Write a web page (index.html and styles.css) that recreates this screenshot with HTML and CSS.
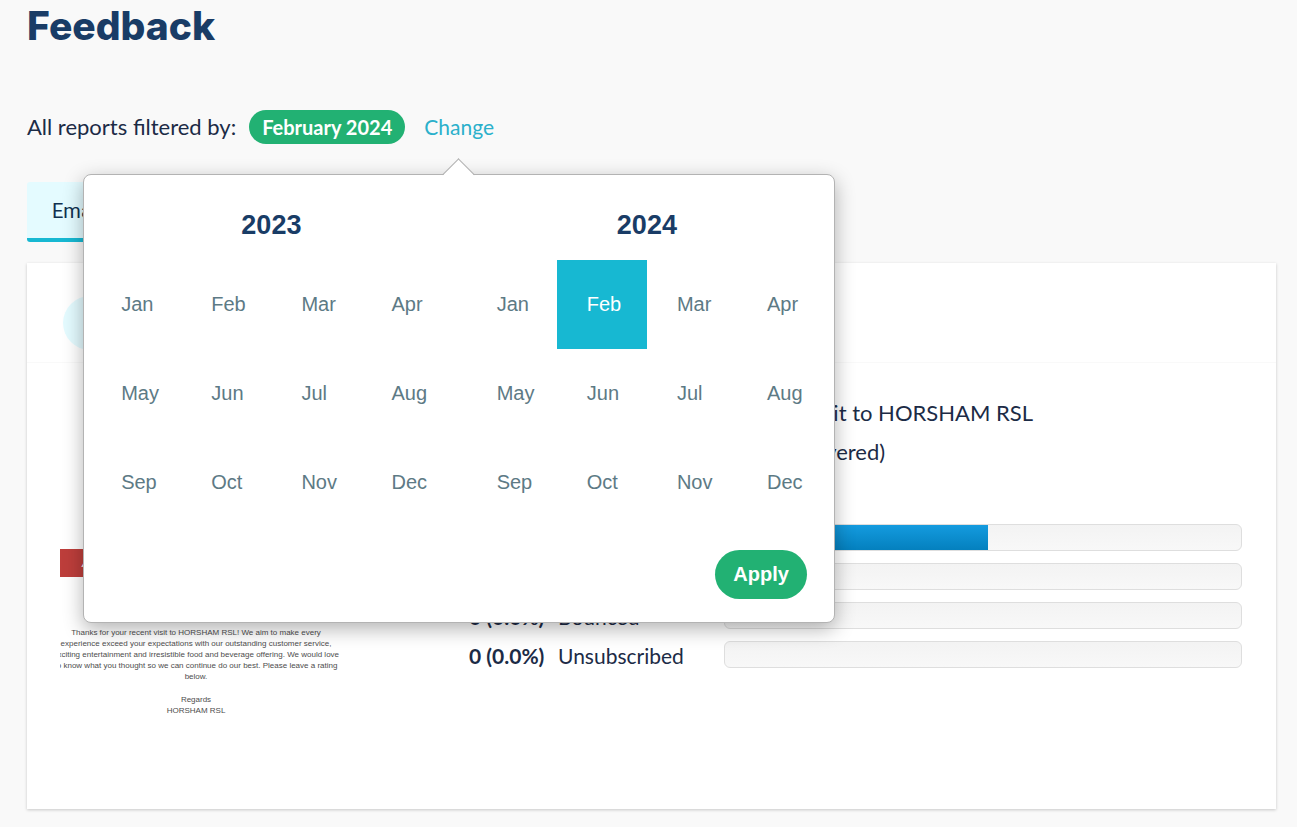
FILE: index.html
```html
<!DOCTYPE html>
<html lang="en">
<head>
    <meta charset="UTF-8">
    <title>Feedback</title>
    <link rel="stylesheet" href="styles.css">
</head>
<body>

    <h1>Feedback</h1>

    <div class="filter-bar">
        <span>All reports filtered by:</span>
        <span class="filter-pill">February 2024</span>
        <div class="filter-change">
            <a href="#">Change</a>

            <div class="popover">
                <span class="popover-arrow"></span>
                <div class="years">
                    <div class="year">
                        <h2>2023</h2>
                        <div class="months">
                            <button>Jan</button>
                            <button>Feb</button>
                            <button>Mar</button>
                            <button>Apr</button>
                            <button>May</button>
                            <button>Jun</button>
                            <button>Jul</button>
                            <button>Aug</button>
                            <button>Sep</button>
                            <button>Oct</button>
                            <button>Nov</button>
                            <button>Dec</button>
                        </div>
                    </div>
                    <div class="year">
                        <h2>2024</h2>
                        <div class="months">
                            <button>Jan</button>
                            <button class="selected">Feb</button>
                            <button>Mar</button>
                            <button>Apr</button>
                            <button>May</button>
                            <button>Jun</button>
                            <button>Jul</button>
                            <button>Aug</button>
                            <button>Sep</button>
                            <button>Oct</button>
                            <button>Nov</button>
                            <button>Dec</button>
                        </div>
                    </div>
                </div>
                <div class="popover-footer">
                    <button class="apply">Apply</button>
                </div>
            </div>
        </div>
    </div>

    <div class="tabs">
        <a href="#" class="tab">Email</a>
    </div>

    <div class="card">
        <div class="card-header">
            <span class="card-icon"></span>
        </div>
        <div class="card-body">
            <div class="preview">
                <div class="preview-banner">A big thanks</div>
                <div class="preview-text">
                    <p>Thanks for your recent visit to HORSHAM RSL! We aim to make every<br>
                    experience exceed your expectations with our outstanding customer service,<br>
                    exciting entertainment and irresistible food and beverage offering. We would love<br>
                    to know what you thought so we can continue do our best. Please leave a rating<br>
                    below.</p>
                    <p>Regards<br>
                    HORSHAM RSL</p>
                </div>
            </div>

            <div class="report">
                <p>Campaigns: Thanks for your recent visit to HORSHAM RSL</p>
                <p>Recipients: Members lists (emails delivered)</p>

                <div class="stats">
                    <div class="stat">
                        <strong>Opened</strong>
                        <span></span>
                        <div class="bar"><div class="bar-fill" style="width: 51%"></div></div>
                    </div>
                    <div class="stat">
                        <strong>Clicked</strong>
                        <span></span>
                        <div class="bar"></div>
                    </div>
                    <div class="stat">
                        <strong>0 (0.0%)</strong>
                        <span>Bounced</span>
                        <div class="bar"></div>
                    </div>
                    <div class="stat">
                        <strong>0 (0.0%)</strong>
                        <span>Unsubscribed</span>
                        <div class="bar"></div>
                    </div>
                </div>
            </div>
        </div>
    </div>

</body>
</html>
```

FILE: styles.css
```css
* {
    box-sizing: border-box;
}

body {
    margin: 0;
    padding: 6px 21px 17px 27px;
    background: #f9f9f9;
    color: #1c2b46;
    font-family: Lato, "Open Sans", sans-serif;
    font-size: 22px;
}

a {
    text-decoration: none;
}

button {
    border: none;
    cursor: pointer;
    font-family: "Liberation Sans", Arial, sans-serif;
    font-size: 20px;
}

h1 {
    margin: 0;
    color: #193c66;
    font-family: Inter, sans-serif;
    font-size: 39px;
    font-weight: 800;
    line-height: 40px;
}

.filter-bar {
    display: flex;
    align-items: center;
    margin-top: 64px;
    height: 34px;
    line-height: 32px;
}

.filter-pill {
    margin: 0 19px 0 13px;
    padding: 0 13px;
    border-radius: 17px;
    background: #22b173;
    color: #fff;
    font-size: 20px;
    font-weight: 700;
    line-height: 34px;
}

.filter-change {
    position: relative;
}

.filter-change a {
    display: block;
    color: #2bb0cb;
    font-size: 21px;
}

/* month picker */
.popover {
    position: absolute;
    top: 63px;
    left: 50%;
    z-index: 10;
    width: 752px;
    transform: translateX(-50%);
    padding: 30px 7px 23px;
    border: 1px solid #b3b3b3;
    border-radius: 8px;
    background: #fff;
    box-shadow: 0 6px 20px rgba(0, 0, 0, 0.3);
}

.popover-arrow {
    position: absolute;
    top: -12px;
    left: 50%;
    width: 23px;
    height: 23px;
    margin-left: -12px;
    border: 1px solid #b3b3b3;
    border-right: none;
    border-bottom: none;
    background: linear-gradient(135deg, #fff 50%, transparent 50%);
    transform: rotate(45deg);
}

.years {
    display: flex;
    gap: 15px;
}

.year {
    flex: 1;
}

.year h2 {
    margin: 0 0 15px;
    color: #193c66;
    font-family: "Liberation Sans", Arial, sans-serif;
    font-size: 27px;
    line-height: 40px;
    text-align: center;
}

.months {
    display: grid;
    grid-template-columns: repeat(4, 1fr);
}

.months button {
    height: 89px;
    padding: 0 0 0 30px;
    background: none;
    color: #5d7a85;
    text-align: left;
}

.months .selected {
    background: #17b8d2;
    color: #fff;
}

.popover-footer {
    display: flex;
    justify-content: flex-end;
    padding: 23px 20px 0;
}

.apply {
    width: 92px;
    height: 49px;
    padding: 0;
    border-radius: 25px;
    background: #22b173;
    color: #fff;
    font-weight: 700;
}

.tabs {
    display: flex;
    margin-top: 38px;
}

.tab {
    padding: 2px 25px 0;
    border-bottom: 4px solid #17b8d2;
    border-radius: 3px;
    background: #e4fbff;
    color: #10304f;
    font-family: Roboto, sans-serif;
    font-size: 20px;
    line-height: 54px;
}

.card {
    margin-top: 21px;
    background: #fff;
    box-shadow: 0 1px 3px rgba(0, 0, 0, 0.2);
}

.card-header {
    height: 100px;
    padding: 33px 36px;
    border-bottom: 1px solid #f9f9f9;
}

.card-icon {
    display: block;
    width: 54px;
    height: 54px;
    border-radius: 50%;
    background: #e4fbff;
}

.card-body {
    display: flex;
    gap: 119px;
    min-height: 446px;
    padding: 30px 34px 0 33px;
}

.preview {
    width: 290px;
    overflow: hidden;
    color: #4d4d4d;
    font-family: "Liberation Sans", Arial, sans-serif;
}

.preview-banner {
    margin-top: 156px;
    padding-left: 22px;
    background: #bd3e3b;
    color: #fff;
    font-size: 12px;
    font-style: italic;
    line-height: 28px;
}

/* the email is wider than its thumbnail, so its left edge is cropped */
.preview-text {
    width: 300px;
    margin: 50px 0 0 -14px;
    font-size: 8px;
    line-height: 11px;
    text-align: center;
    white-space: nowrap;
}

.preview-text p {
    margin: 0 0 12px;
}

.report {
    flex: 1;
}

.report p {
    margin: 0;
    line-height: 39px;
}

.stats {
    display: flex;
    flex-direction: column;
    gap: 12px;
    margin-top: 53px;
}

.stat {
    display: grid;
    grid-template-columns: 77px 154px 1fr;
    column-gap: 12px;
    height: 27px;
    font-size: 21px;
    line-height: 29px;
    white-space: nowrap;
}

.bar {
    height: 27px;
    overflow: hidden;
    border: 1px solid #dedede;
    border-radius: 6px;
    background: linear-gradient(#f3f3f3, #f8f8f8);
}

.bar-fill {
    height: 100%;
    background: linear-gradient(#149bdf, #0480be);
}
```
